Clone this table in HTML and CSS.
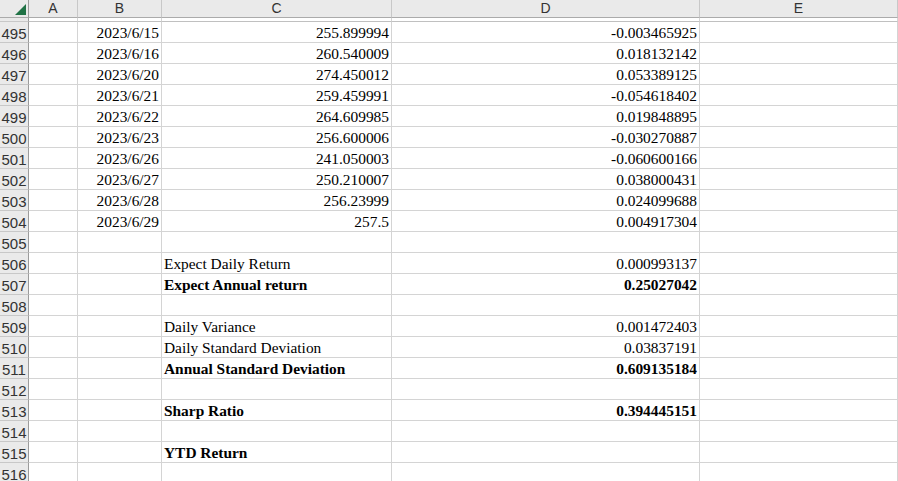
FILE: index.html
```html
<!DOCTYPE html>
<html>
<head>
<meta charset="utf-8">
<link rel="stylesheet" href="styles.css">
</head>
<body>
<div class="sheet">
  <div class="row head">
    <div class="corner"><span class="tri"></span></div>
    <div class="ch">A</div><div class="ch">B</div><div class="ch">C</div><div class="ch">D</div><div class="ch">E</div>
  </div>
  <div class="row part">
    <div class="rh"><span class="cut">494</span></div>
    <div class="c"></div><div class="c"></div><div class="c"></div><div class="c"></div><div class="c"></div>
  </div>
  <div class="row"><div class="rh">495</div><div class="c"></div><div class="c r">2023/6/15</div><div class="c r">255.899994</div><div class="c r">-0.003465925</div><div class="c"></div></div>
  <div class="row"><div class="rh">496</div><div class="c"></div><div class="c r">2023/6/16</div><div class="c r">260.540009</div><div class="c r">0.018132142</div><div class="c"></div></div>
  <div class="row"><div class="rh">497</div><div class="c"></div><div class="c r">2023/6/20</div><div class="c r">274.450012</div><div class="c r">0.053389125</div><div class="c"></div></div>
  <div class="row"><div class="rh">498</div><div class="c"></div><div class="c r">2023/6/21</div><div class="c r">259.459991</div><div class="c r">-0.054618402</div><div class="c"></div></div>
  <div class="row"><div class="rh">499</div><div class="c"></div><div class="c r">2023/6/22</div><div class="c r">264.609985</div><div class="c r">0.019848895</div><div class="c"></div></div>
  <div class="row"><div class="rh">500</div><div class="c"></div><div class="c r">2023/6/23</div><div class="c r">256.600006</div><div class="c r">-0.030270887</div><div class="c"></div></div>
  <div class="row"><div class="rh">501</div><div class="c"></div><div class="c r">2023/6/26</div><div class="c r">241.050003</div><div class="c r">-0.060600166</div><div class="c"></div></div>
  <div class="row"><div class="rh">502</div><div class="c"></div><div class="c r">2023/6/27</div><div class="c r">250.210007</div><div class="c r">0.038000431</div><div class="c"></div></div>
  <div class="row"><div class="rh">503</div><div class="c"></div><div class="c r">2023/6/28</div><div class="c r">256.23999</div><div class="c r">0.024099688</div><div class="c"></div></div>
  <div class="row"><div class="rh">504</div><div class="c"></div><div class="c r">2023/6/29</div><div class="c r">257.5</div><div class="c r">0.004917304</div><div class="c"></div></div>
  <div class="row"><div class="rh">505</div><div class="c"></div><div class="c"></div><div class="c"></div><div class="c"></div><div class="c"></div></div>
  <div class="row"><div class="rh">506</div><div class="c"></div><div class="c"></div><div class="c">Expect Daily Return</div><div class="c r">0.000993137</div><div class="c"></div></div>
  <div class="row"><div class="rh">507</div><div class="c"></div><div class="c"></div><div class="c b">Expect Annual return</div><div class="c r b">0.25027042</div><div class="c"></div></div>
  <div class="row"><div class="rh">508</div><div class="c"></div><div class="c"></div><div class="c"></div><div class="c"></div><div class="c"></div></div>
  <div class="row"><div class="rh">509</div><div class="c"></div><div class="c"></div><div class="c">Daily Variance</div><div class="c r">0.001472403</div><div class="c"></div></div>
  <div class="row"><div class="rh">510</div><div class="c"></div><div class="c"></div><div class="c">Daily Standard Deviation</div><div class="c r">0.03837191</div><div class="c"></div></div>
  <div class="row"><div class="rh">511</div><div class="c"></div><div class="c"></div><div class="c b">Annual Standard Deviation</div><div class="c r b">0.609135184</div><div class="c"></div></div>
  <div class="row"><div class="rh">512</div><div class="c"></div><div class="c"></div><div class="c"></div><div class="c"></div><div class="c"></div></div>
  <div class="row"><div class="rh">513</div><div class="c"></div><div class="c"></div><div class="c b">Sharp Ratio</div><div class="c r b">0.394445151</div><div class="c"></div></div>
  <div class="row"><div class="rh">514</div><div class="c"></div><div class="c"></div><div class="c"></div><div class="c"></div><div class="c"></div></div>
  <div class="row"><div class="rh">515</div><div class="c"></div><div class="c"></div><div class="c b">YTD Return</div><div class="c"></div><div class="c"></div></div>
  <div class="row"><div class="rh">516</div><div class="c"></div><div class="c"></div><div class="c"></div><div class="c"></div><div class="c"></div></div>
</div>
</body>
</html>
```
FILE: styles.css
```css
html, body {
  margin: 0;
  padding: 0;
  background: #ffffff;
  overflow: hidden;
}
.sheet {
  width: 898px;
  height: 481px;
  overflow: hidden;
}
.row {
  display: grid;
  grid-template-columns: 29px 49px 84px 230px 308px 1fr;
  height: 21px;
}
.row > div {
  box-sizing: border-box;
  border-right: 1px solid #d4d4d4;
  border-bottom: 1px solid #d4d4d4;
  overflow: hidden;
  white-space: nowrap;
}
.head {
  height: 18px;
}
.head > div {
  background: #eaeaea;
  border-right: 1px solid #c8c8c8;
  border-bottom: 1px solid #ababab;
}
.corner {
  display: flex;
  justify-content: flex-end;
  align-items: flex-end;
  padding: 0 2px 2px 0;
}
.head > .corner {
  border-right: 1px solid #9b9b9b;
}
.tri {
  width: 0;
  height: 0;
  border-left: 11px solid transparent;
  border-bottom: 11px solid #217346;
}
.ch {
  font-family: "Liberation Sans", Arial, sans-serif;
  font-size: 14px;
  line-height: 17px;
  color: #333333;
  text-align: center;
}
.part {
  height: 4px;
}
.part > div {
  border-bottom: 1px solid #c0c0c0;
}
.rh {
  background: #eaeaea;
  font-family: "Liberation Sans", Arial, sans-serif;
  font-size: 15px;
  line-height: 19px;
  padding-top: 2px;
  color: #333333;
  text-align: center;
}
.row > .rh {
  border-right: 1px solid #9b9b9b;
  border-bottom: 1px solid #c8c8c8;
}
.part > .rh {
  padding-top: 0;
}
.cut {
  display: block;
  margin-top: -16px;
}
.c {
  font-family: "Liberation Serif", "Times New Roman", serif;
  font-size: 15.4px;
  line-height: 17px;
  padding: 2px 2px 0 2px;
  color: #000000;
}
.r {
  text-align: right;
}
.b {
  font-weight: bold;
}
```
